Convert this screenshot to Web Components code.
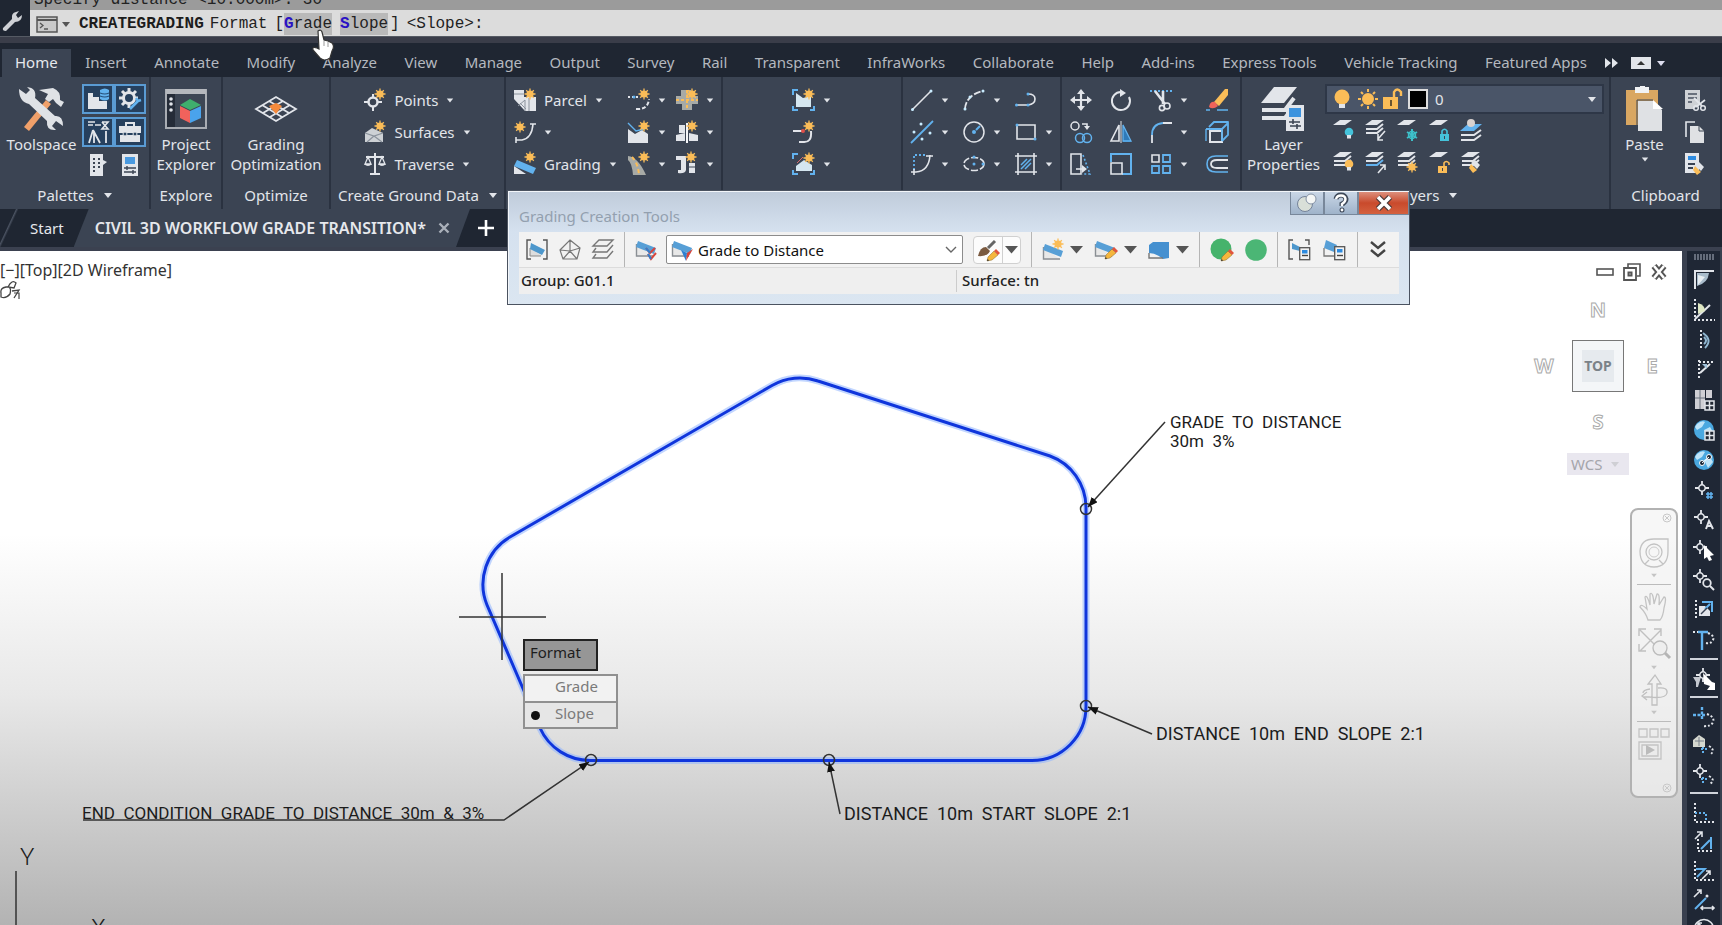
<!DOCTYPE html>
<html lang="en">
<head>
<meta charset="utf-8">
<title>Civil 3D Workflow Grade Transition</title>
<style>
html,body{margin:0;height:100%}
body{font:15px/20px "Noto Sans","Open Sans",sans-serif;background:#1f2632;overflow:hidden}
</style>
</head>
<body>
<cad-workspace></cad-workspace>
<script>
const W='#e2e5ea', B='#62b2ee', O='#fbbd58', G='#8b929c';

/* shared icon fragments */
const sun=(x,y)=>`<g transform="translate(${x} ${y})"><circle r="3.6" fill="${O}"/><path d="M0-5.5V5.5M-5.5 0H5.5M-3.8-3.8 3.8 3.8M-3.8 3.8 3.8-3.8" stroke="${O}" stroke-width="1.3"/></g>`;
const ln=(d,c=W,w=1.6,x='')=>`<path d="${d}" fill="none" stroke="${c}" stroke-width="${w}" ${x}/>`;
const fl=(d,c=W,x='')=>`<path d="${d}" fill="${c}" ${x}/>`;
const dot=(x,y,c='#c9ecff',r=1.5)=>`<circle cx="${x}" cy="${y}" r="${r}" fill="${c}"/>`;
const dash='stroke-dasharray="2 2"';
const sheet=(y,c=W)=>fl(`M8 ${y}H20L13 ${y+5}H1Z`,c);
const stack=(c2=W,c3=W)=>sheet(1)+ln('M2 10H13L19 5',c2,2)+ln('M2 14H13L19 9',c3,2);
const target=(x,y)=>`<g transform="translate(${x} ${y})"><circle r="3.2" fill="none" stroke="${W}" stroke-width="1.5"/><path d="M0-3V-7M0 3V7M-3 0H-7M3 0H7" stroke="${W}" stroke-width="1.8"/></g>`;
const pencil=(x,y)=>`<g transform="translate(${x} ${y})"><path d="M0 10 1 6 7 0 11 4 5 9Z" fill="#f5b63c" stroke="#8a6a2c" stroke-width=".5"/><path d="M7 0 9-2 13 2 11 4Z" fill="#e2553d"/><path d="M0 10 .6 8 2.200 9.400Z" fill="#333"/></g>`;
const palette=(x,y,w=11,h=13)=>`<g transform="translate(${x} ${y})"><rect x=".7" y=".7" width="${w}" height="${h}" fill="#f3f3f3" stroke="#555" stroke-width="1.3"/><rect x="3" y="3" width="${w-4.500}" height="3.500" fill="#2d8be0"/><path d="M3 ${h-3.500}H${w-1}" stroke="#444" stroke-width="1.400"/></g>`;
const slab=fl('M1 5V18H19','#e8e8e8')+ln('M1.500 5V17H18','#8a8f94',1.4)+fl('M3 2 21 9 19 15 1 8Z','#579fd6');
const bulb=(x,y,c=O)=>`<g transform="translate(${x} ${y})"><circle r="4.3" fill="${c}"/><path d="M-2 3H2V6.500H-2Z" fill="${W}"/></g>`;
const lock=(x,y,c,open)=>`<g transform="translate(${x} ${y})"><rect x="0" y="5" width="9" height="7" fill="${c}"/><path d="${open?'M6 5V2Q8-1 11 2V4':'M2 5V2Q4.500-1.500 7 2V5'}" fill="none" stroke="${c}" stroke-width="1.600"/><path d="M4.500 7V10" stroke="#3b4453"/></g>`;
const brush=fl('M11 12 15 9 20 14 17 18Z')+fl('M11 13 17 19 13 22 9 17Z',O);
const globe=`<circle cx="11" cy="11" r="10" fill="#4aa8e0"/><path d="M4 5Q9 1 12 3L9 8 4 11 2 8ZM11 11 17 8 20 13 15 19Z" fill="#bfe4f8"/>`;
const grid=(x,y)=>`<path d="M${x} ${y}h9v9h-9zM${x+4.500} ${y}v9M${x} ${y+4.500}h9" fill="#1f2632" stroke="${W}" stroke-width="1.5"/>`;

const ICONS={
 wrench:[22,22,fl('M2 18 11 9Q10 3 15 2L18 1 15 5 17 8 21 5Q21 12 14 12L5 21Q1 21 2 18Z','#cfd1d6')],
 prompt:[22,17,`<rect x="1" y="1" width="20" height="15" fill="#c9c9c9" stroke="#555" stroke-width="1.500"/><path d="M1 4H21" stroke="#555" stroke-width="2"/>`+ln('M4 7 7 9.500 4 12M8 13H12','#555',1.3)],
 caret:[8,5,fl('M0 0H8L4 5Z','currentColor')],
 tools:[46,44,fl('M6 40 28 13 33 17 11 44Z','#f0a06a')+fl('M21 3 35 1Q43 4 42 13L46 15 43 20 38 16 35 12 31 15 27 12 30 7Z','#dfe2e6')+fl('M1 2 8 7 12 3 9 0Q19 1 17 11L37 29Q45 28 45 39L38 34 34 39 38 43Q28 44 29 34L11 17Q1 15 1 2Z','#dfe2e6')],
 t1:[24,22,fl('M2 5H7V17H21V21H2Z')+fl('M7 9H13V13H21V18H7Z')+fl('M14 2Q19-1 23 2V11Q19 14 14 11Z',B)+ln('M14 5Q19 7 23 5M14 8Q19 10 23 8','#26507a',1.2)],
 t2:[24,22,`<circle cx="11" cy="10" r="5.500" fill="none" stroke="${W}" stroke-width="3"/>`+ln('M11 0V4M11 16V20M1 10H5M17 10H20M4 3 7 6M18 3 15 6M4 17 7 14',W,3)+ln('M12 21 20 13M18 10 20 13 23 12',B,2.5)],
 t3:[24,22,ln('M2 4H7M9 4H12M2 1H9M12 4H15M16 1H22L16 8H22L16 1',W,1.6)+ln('M7 9 3 22M7 9 14 22M8 10V22M20 10V22',W,1.8)],
 t4:[24,22,ln('M8 5V2H16V5',W,2)+fl('M1 5H23V12H1Z')+fl('M2 14H22V21H2Z')+`<circle cx="7" cy="13" r="2" fill="#26405e" stroke="${W}"/><circle cx="17" cy="13" r="2" fill="#26405e" stroke="${W}"/>`],
 t5:[18,22,fl('M1 0H14V6L18 8 14 11V22H1Z')+fl('M4 4H6V6H4ZM9 4H11V6H9ZM4 8H6V10H4ZM9 8H11V10H9ZM4 12H6V14H4ZM9 12H11V14H9ZM4 16H6V18H4Z','#3b4453')],
 t6:[18,22,fl('M1 0H17V22H1Z')+fl('M4 3H14V10H4Z','#4a9ae0')+ln('M3 14H15M3 18H15M6 12V16M12 16V20','#3b4453',1.4)],
 explorer:[42,40,`<rect x="1" y="1" width="40" height="38" fill="#3d4654" stroke="#a9adb3" stroke-width="2"/><path d="M1 0H41V5H1Z" fill="#b5b8bd"/><path d="M2 5H10V38H2Z" fill="#252c38"/>`+dot(6,10,W,1.8)+dot(6,15,W,1.8)+dot(6,21,W,1.8)+fl('M15 16 25 10 36 16 25 21Z','#3fae6d')+fl('M15 17 25 22V34L15 29Z','#f0625c')+fl('M36 17 25 22V34L36 29Z','#4aa3ec')],
 optimize:[44,28,ln('M2 14 22 2 42 14 22 26ZM8 10 28 22M15 6 35 18M29 6 9 18M36 10 16 22',W,1.8)+fl('M15 11 22 8 28 11 22 19Z','#f58a3c')],
 points:[22,22,`<circle cx="9" cy="13" r="4.500" fill="none" stroke="${W}" stroke-width="2.500"/>`+ln('M9 5V9M9 17V22M0 13H4M14 13H18',W,2)+sun(16,5)],
 surfaces:[22,22,fl('M1 12 8 7 19 12V21H1Z','#cdd1d5')+ln('M1 12 10 15 19 12M10 15 3 21M10 15 18 21','#8a929c',1.2)+sun(16,5)],
 traverse:[22,22,ln('M11 0V20M2 4H20M6 21H16',W,2)+ln('M4 4 1 11H7ZM18 4 15 11H21Z',W,1.3)+fl('M0 11H8Q4 15 0 11ZM14 11H22Q18 15 14 11Z')],
 parcel:[22,22,fl('M0 1H10V8H22V22H11L0 10Z')+ln('M0 5H10M11 11 4 17M11 11V22M15 9V22M6 14 12 20','#8a929c',1)+sun(16,5)],
 curve:[22,22,ln('M2 19H8Q18 17 19 3M2 16V22M16 3H22')+sun(6,6)],
 grading:[22,22,fl('M0 13 12 21H0Z')+fl('M3 7 22 15 19 21 0 13Z',B)+sun(16,4)],
 alignment:[22,22,ln('M0 8H11',W,2,dash)+ln('M8 20Q20 21 21 10',W,2,'stroke-dasharray="4 2"')+sun(16,5)+dot(6,8,B)],
 profile:[22,22,fl('M0 8 7 13 14 9 20 13V22H0Z')+ln('M0 2 8 10 16 8',B,1.4)+sun(16,5)],
 corridor:[22,22,fl('M0 3Q10 4 18 22H5Q4 10 0 7Z','#a7aaa6')+ln('M4 4Q10 10 11 22',O,2,'stroke-dasharray="4 3"')+sun(16,4)],
 intersection:[22,22,fl('M5 1H15V7H22V15H16V21H6V15H0V7H5Z','#a7aaa6')+ln('M11 1V21M0 11H22',O,2,'stroke-dasharray="3 2"')+sun(16,5)],
 assembly:[22,22,fl('M3 4H9V12H3ZM0 14 9 12V20H0ZM13 12 22 14V20H13Z')+ln('M11 2V22','#f5f6f8',2)+sun(16,5)],
 pipe:[22,22,fl('M0 3H10V17Q9 21 2 20V17H5V7H0ZM13 10H19V20H13Z')+ln('M13 14H19','#3b4453',1)+sun(15,4)],
 pview:[22,22,ln('M0 6V1H5M0 17V21H5M17 21H21V17',B,2)+fl('M3 4 10 9 18 7V18H3Z','#d5e6ef')+sun(16,5)],
 sample:[22,22,ln('M0 10H9',W,2)+dot(10,10,'#e0504a',2)+ln('M6 21H10Q19 22 18 10',W,2)+sun(16,5)],
 section:[22,22,ln('M0 6V1H5M0 17V21H5M17 21H21V17',B,2)+fl('M3 13 11 7 19 12V18H3Z','#d5e6ef')+ln('M4 10 10 4','#d86a6a',1)+sun(16,5)],
 line:[22,22,ln('M1 21 20 2')+dot(1.5,20.5)+dot(20,2)],
 arc:[22,22,ln('M2 20Q3 6 20 2',W,1.8,'stroke-dasharray="7 2"')+dot(2,20)+dot(20,2)+dot(7,8)],
 pline:[22,22,ln('M1 16H13M13 5Q20 5 20 10T13 16')+dot(1.500,16,B)+dot(13,16,B)+dot(13,5,B)],
 xline:[22,22,ln('M0 22 22 0',B,1.8)+dot(3,11)+dot(10,3)+dot(11,18)+dot(19,12)],
 circle:[22,22,`<circle cx="11" cy="11" r="10" fill="none" stroke="${W}" stroke-width="1.500"/>`+dot(11,11,B,2)+ln('M13 9 17 5',B,2)],
 rect:[22,22,ln('M2 4H20V18H2Z')+dot(2,4,B)+dot(20,18,B)],
 fit:[22,22,ln('M3 17V2H16',B,1.8,dash)+ln('M3 16V22M0 19H5Q18 18 19 2M15 3H22')],
 ellipse:[22,22,`<ellipse cx="11" cy="11" rx="10" ry="6.500" fill="none" stroke="${W}" stroke-width="1.600" stroke-dasharray="7 2"/>`+dot(11,4,B)+dot(11,11,B)+dot(20,11,B)],
 hatch:[22,22,ln('M3 0V22M19 0V22M0 3H22M0 19H22')+ln('M6 12 12 6M6 16 16 6M10 16 16 10',B,1.5)],
 move:[22,22,ln('M11 2V20M2 11H20',W,2.2)+fl('M11 0 15 5H7ZM11 22 15 17H7ZM0 11 5 7V15ZM22 11 17 7V15Z')],
 rotate:[22,22,ln('M11 3A9 9 0 1 0 19 8',W,2)+fl('M10 0 16 4 10 8Z')],
 trim:[22,22,ln('M0 2H22',B,2,dash)+ln('M5 2 15 15M13 2 13 15',W,2.6)+`<circle cx="17" cy="17" r="3" fill="none" stroke="${W}" stroke-width="1.600"/><circle cx="12" cy="19" r="2.600" fill="none" stroke="${W}" stroke-width="1.600"/>`],
 erase:[22,22,fl('M8 13 19 0H22V6L13 17Z',O)+fl('M3 18Q4 12 9 13L12 17Q7 21 3 18Z','#f0635a')+ln('M0 21H4M11 21H22',B,1.6)],
 copy:[22,22,`<circle cx="5" cy="5" r="4" fill="none" stroke="${W}" stroke-width="1.500"/><circle cx="10" cy="17" r="4.500" fill="none" stroke="${B}" stroke-width="1.500"/><circle cx="17" cy="17" r="4.500" fill="none" stroke="${B}" stroke-width="1.500"/>`+ln('M12 3H17V7')+fl('M14 5H20L17 9Z')],
 mirror:[22,22,ln('M9 4V20H1Z')+fl('M13 3V21H21Z','#2f7ab8')+ln('M13 4V20H21Z',B,1.3)+ln('M11 0V22',W,1)],
 fillet:[22,22,ln('M2 14Q2 3 13 2',B,1.8)+ln('M13 2H22M2 22V14',W,1.8)],
 cube:[22,22,ln('M4 10H16V21H4Z',W,2)+ln('M0 8H16V20M16 8 22 2V14L16 20M3 6 8 1H22',B,1.8)+ln('M0 8V20',B,1.4)],
 stretch:[22,22,ln('M1 1H11V21H1Z')+ln('M13 2 20 21H12',B,1.6,dash)+ln('M6 16H15')+fl('M12 12 17 16 12 20Z')],
 scale:[22,22,ln('M1 9V1H21V21H12',B,2)+ln('M1 10H12V21H1Z')],
 array:[22,22,ln('M2 2H9V9H2Z')+ln('M13 2H20V9H13ZM2 13H9V20H2ZM13 13H20V20H13Z',B,1.8)],
 offset:[22,22,ln('M22 3H10Q1 3 1 11T10 19H22',B,1.6)+ln('M22 7H11Q5 7 5 11T11 15H22',W,1.8)],
 layerprops:[46,46,fl('M14 1H37L24 17H1Z')+ln('M2 24H25L34 12M2 32H25L34 20',W,4)+fl('M26 19H44V45H26Z')+fl('M29 22H41V31H29Z','#3d93de')+ln('M29 36H40M30 40H41M33 33V38M37 38V43','#3b4453',1.6)],
 bulb:[20,22,`<circle cx="9" cy="9" r="7.500" fill="${O}"/><path d="M6 16H12V20H6Z" fill="${W}"/>`],
 sun:[20,20,`<circle cx="10" cy="10" r="6" fill="${O}"/>`+ln('M10 0V3M10 17V20M0 10H3M17 10H20M3 3 5 5M15 15 17 17M3 17 5 15M15 5 17 3',O,2)],
 unlock:[20,22,`<rect x="0" y="9" width="15" height="12" fill="${O}"/>`+ln('M11 10V4Q14-1 18 4V8',O,2.400)+ln('M8 12V18','#6b5530',2)],
 lo1:[22,22,sheet(1)+bulb(17,13,'#45c3da')],
 lo2:[22,22,stack()+ln('M21 12 14 20M14 15V21H19')],
 lo3:[22,22,sheet(1)+ln('M16 10V22M11 13 21 19M21 13 11 19','#3dbfc9',2)+`<circle cx="16" cy="16" r="3.500" fill="none" stroke="#3dbfc9" stroke-width="1.500"/>`],
 lo4:[22,22,sheet(1)+lock(12,10,'#45c3da')],
 lo5:[22,22,fl('M8 5H22L14 12H0Z',B)+`<circle cx="11" cy="4" r="4" fill="#d9d2cf"/>`+ln('M1 16H14L21 11M1 21H14L21 16',W,2)],
 lo6:[22,22,stack()+bulb(17,13)],
 lo7:[22,22,stack(W,B)+ln('M14 22 21 14M16 14H21V19')],
 lo8:[22,22,stack()+`<g transform="translate(0 11)">${sun(16,5)}</g>`],
 lo9:[22,22,sheet(1)+lock(10,10,O,1)],
 lo10:[22,22,stack()+brush],
 paste:[38,44,fl('M0 3H32V38H0Z','#d9a762')+fl('M9 0H14V-1H19V0H23V6H9Z','#f1f3f5')+fl('M12 14H27L36 23V44H12Z','#dfe1e4')+fl('M27 13 37 22H27Z','#fff')+ln('M11 44V13H27','#3b4453',1)],
 cut:[22,22,fl('M1 1H16V14L10 20H1Z','#cfd2d6')+ln('M4 5H13M4 9H13M4 13H8','#4a5260',1.4)+ln('M10 9 18 17M21 11 12 18',W,1.8)+`<circle cx="19" cy="19" r="2.300" fill="none" stroke="${W}" stroke-width="1.500"/><circle cx="12" cy="19" r="2.300" fill="none" stroke="${W}" stroke-width="1.500"/>`],
 copyclip:[22,22,ln('M2 16V1H11')+fl('M6 5H15L20 10V22H6Z','#dfe1e4')+ln('M15 5V10H20','#3b4453',1)],
 match:[22,22,fl('M1 0H15V20H1Z')+fl('M4 3H12V7H4Z','#2d8be0')+ln('M4 11H11M4 15H9','#3b4453',2)+brush],
 ffwd:[14,10,fl('M0 0 6 5 0 10ZM7 0 13 5 7 10Z')],
 mini:[22,12,fl('M1 0H21V12H1Z')+fl('M7 8 11 4 15 8Z','#333')],
 plus:[18,18,ln('M9 1V17M1 9H17','#fff',2.6)],
 x:[12,12,ln('M1.500 1.500 10.500 10.500M10.500 1.500 1.500 10.500','#aab0ba',2.4)],
 /* dialog */
 g1:[22,22,ln('M5 1H1V20H5M17 1H21V20H17','#555',1.4)+fl('M4 9V17H16','#ddd')+ln('M4 9V17H15','#888',1)+fl('M5 4 19 11 16 16 4 10Z','#4d97cc')],
 g2:[22,22,ln('M11 1 21 9 18 20H4L1 11ZM11 1V12M1 11 11 12 21 9M4 20 11 12 18 20','#777',1.2)],
 g3:[22,22,ln('M7 1H21L15 7H1ZM4 9 1 13H15L21 6M4 15 1 19H15L21 12','#777',1.4)],
 g4:[22,22,slab+ln('M11 9 15 14 20 9M13 15 16 20 21 14','#d8453c',2)+ln('M11 9 15 14M13 15 16 20','#2f7fd0',2)],
 g5:[22,22,slab+fl('M10 11 15 22 16 14Z','#2f7fd0')+fl('M22 10 15 22 16 14Z','#d8453c')],
 g6:[22,22,fl('M1 17Q3 8 9 8L13 12Q10 18 1 17Z','#7a5a40')+ln('M11 9 18 2','#666',3)+pencil(10,12)],
 g7:[22,22,`<g transform="translate(0 3)">${slab}</g>`+sun(16,5)],
 g8:[24,22,slab+pencil(11,10)],
 g9:[22,22,fl('M1 6 5 3H21V19L15 20Q8 14 1 14Z','#4590d0')+ln('M1 14V19H15','#777',1.4)],
 g10:[24,24,`<circle cx="11" cy="11" r="10.500" fill="#46b36c"/>`+pencil(11,13)],
 g11:[22,22,`<circle cx="11" cy="11" r="10.800" fill="#4bb675"/>`],
 g12:[24,22,ln('M5 1H1V20H5M17 1H21V6','#555',1.4)+fl('M4 4 12 8V12L4 10Z','#4d97cc')+palette(11,8,10,12)],
 g13:[24,22,fl('M3 1 14 6 11 13 1 9Z','#579fd6')+ln('M1 9V17H11','#777',1.3)+palette(11,7,10,13)],
 g14:[16,18,ln('M1 1 8 7 15 1M1 9 8 15 15 9','#444',2.4)],
 mcaret:[13,8,fl('M0 0H13L6.500 7.500Z','#555')],
 chev:[12,8,ln('M1 1 6 6 11 1','#666',1.4)],
 pin:[22,20,`<circle cx="9" cy="11" r="7.500" fill="#d9dfd8" stroke="#75839a"/><circle cx="15" cy="6" r="5" fill="#f4f6f5" stroke="#8592a5"/>`],
 help:[16,18,`<path d="M3 5Q4 1 8 1T13 5Q13 8 9 10V12" fill="none" stroke="#3d4858" stroke-width="5"/><circle cx="9" cy="16" r="2.500" fill="#3d4858"/><path d="M3 5Q4 1.500 8 1.500T12.500 5Q12.500 8 9 10V12" fill="none" stroke="#fff" stroke-width="2.400"/><circle cx="9" cy="16" r="1.400" fill="#fff"/>`],
 close:[20,18,ln('M4 3 16 15M16 3 4 15','#4a3c3c',6)+ln('M4 3 16 15M16 3 4 15','#fff',3.6)],
 /* drawing area */
 dmin:[18,9,`<rect x="1" y="1" width="16" height="6" fill="#fff" stroke="#555" stroke-width="1.600"/>`],
 dmax:[18,18,ln('M5 4V1H17V13H14','#555',1.600)+ln('M1 5H13V17H1Z','#555',1.800)+ln('M5.500 9.500H8.500V12.500H5.500Z','#555',2)],
 dclose:[18,16,ln('M4 2 14 14M14 2 4 14','#555',6.500)+ln('M4 2 14 14M14 2 4 14','#fff',2.600)],
 corner:[22,20,ln('M1 13Q0 8 6 7T10 14Q6 19 1 17ZM8 7Q12-1 16 3L14 8ZM12 11 19 10 14 18','#444',1.300)+ln('M14 13H19V19','#444',1.200)],
 hand:[24,32,`<path d="M7 2Q10 0 11 3L13 11 17 12 21 14Q24 17 21 22L19 29Q13 33 9 29L2 21Q1 17 6 19L8 20Z" fill="#fff" stroke="#333" stroke-width="1.200"/>`+ln('M13 12V17M17 13V18','#999',1)],
 wheel:[32,32,ln('M2 14Q3 2 16 2H30V14Q30 30 16 30T2 14ZM8 15A8 8 0 1 0 24 15 8 8 0 1 0 8 15ZM11 23 7 27M21 23 25 27','#c3c3c3',1.300)+`<circle cx="16" cy="15" r="5" fill="none" stroke="#ccc"/>`],
 pan:[32,32,ln('M10 29Q8 22 2 16Q3 12 9 18L7 6Q9 3 12 14V3Q15 0 16 13L19 3Q22 2 21 14L26 6Q29 6 26 17 25 26 22 29Z','#c3c3c3',1.300)],
 zoomx:[34,34,ln('M3 3 22 22M2 9V2H9M24 3 3 24M17 2H24V9M2 17V24H9','#c0c0c0',1.400)+`<circle cx="23" cy="21" r="7" fill="#eee" stroke="#bbb" stroke-width="1.300"/>`+ln('M28 26 33 31','#b5b5b5',3)],
 orbit:[30,32,ln('M13 31V10H9L16 1 22 10H18V31ZM19 14Q29 13 28 19T10 23H4M8 18 3 22 8 26M4 19Q4 16 11 15','#c0c0c0',1.300)],
 motion:[32,32,ln('M1 1H9V9H1ZM12 1H20V9H12ZM23 1H31V9H23ZM1 14H23V31H1ZM4 17H20V28H4Z','#c3c3c3',1.300)+fl('M8 17 17 22 8 27Z','#bbb')],
 smallx:[10,10,`<circle cx="5" cy="5" r="4" fill="none" stroke="#c8c8c8"/>`+ln('M3 3 7 7M7 3 3 7','#c8c8c8',1)],
 /* snap toolbar */
 s1:[22,22,ln('M2 20V2H21',W,2)+fl('M4 4H16Q15 14 4 17Z','#a9bccb')+fl('M5 6 12 8 5 16Z','#e8eef2')],
 s2:[22,22,ln('M2 0V21H22',W,2,dash)+ln('M2 20 17 6',W,2)+fl('M5 4Q12 6 12 12L5 15Z','#dfe8c4')],
 s3:[22,22,ln('M8 1V21',W,2,dash)+ln('M10 4Q20 11 12 19M11 8Q15 12 11 15','#8fb6d0',2)],
 s4:[22,22,ln('M6 1V21M6 3H20',W,2,dash)+ln('M7 14 17 5',W,2)+fl('M9 5H14V10Z','#9fc1da')],
 s5:[22,22,fl('M2 1H12V20H2ZM13 1H19V9H13Z','#cfcfd4')+ln('M2 9H12M7 1V20','#69707c',1)+grid(12,12)],
 s6:[22,22,globe+grid(12,12)],
 s7:[22,22,globe+`<circle cx="9" cy="14" r="2.500" fill="#14202f" stroke="#fff"/><circle cx="16" cy="8" r="2.500" fill="#14202f" stroke="#fff"/>`+ln('M9 14 16 8','#fff',1)],
 s8:[22,22,target(9,9)+ln('M15 13V20M18 13V20M13 15H20M13 18H20',B,1.5)],
 s9:[22,22,target(8,8)+ln('M13 20 16 12 20 20M14 17H19',W,2)],
 s10:[22,22,target(7,8)+fl('M11 6 21 16 17 17 19 21 16 22 14 18 11 20Z','#fff')],
 s11:[22,22,target(7,7)+`<circle cx="14" cy="14" r="3.800" fill="none" stroke="${W}" stroke-width="1.800"/>`+ln('M17 17 21 21',W,2)],
 s12:[22,22,ln('M3 1V21',W,2,dash)+fl('M6 7 12 7 17 12V17H6Z')+ln('M9 3H19V13M12 10 17 5',B,2)+ln('M8 15 14 9','#384252',1.500)],
 s13:[22,22,ln('M0 3H9',W,2,dash)+ln('M5 3H15M9 3V21',B,2.400)+ln('M15 4Q22 7 20 11T13 14',W,2,dash)],
 s14:[24,24,fl('M1 10H9L6 20H4V15Z','#c4c8cf')+target(11,8)+fl('M11 6 20 15 23 16V23H15L18 19 12 17Z','#fff')],
 s15:[22,22,ln('M9 1V14M0 9H12',B,2.400,'stroke-dasharray="3 1.500"')+ln('M14 8Q22 11 20 16T9 20',W,2,dash)],
 s16:[24,22,fl('M1 5 7 0 13 4V12H1Z','#d5d8cf')+ln('M3 6H12M7 2V11','#78808a',1)+ln('M9 14H16M11 12V18',B,2,dash)+ln('M17 11Q24 15 18 20',W,2,dash)],
 s17:[24,22,target(8,7)+ln('M9 15H16M11 13V19',B,2,dash)+ln('M17 12Q24 16 18 20',W,2,dash)],
 s18:[22,22,ln('M2 1V20H21',W,2,dash)+ln('M2 11H13V20',B,2,dash)],
 s19:[22,22,ln('M5 8V20H20',W,2,dash)+ln('M2 8 9 1M4 1H9V6')+ln('M8 18 17 9M18 6V18',B,2)],
 s20:[22,22,ln('M2 1V20H21',W,2,dash)+ln('M3 9H12L4 17',B,1.800)+ln('M9 19 17 11M13 11H17V15',W,1.600)],
 s21:[22,22,ln('M1 8 8 1M4 1H8V5M8 19H21M10 17 8 19 10 21M19 17 21 19 19 21')+ln('M2 20 13 9',B,2)+dot(14,7,W)],
 s22:[22,22,`<circle cx="11" cy="11" r="9.500" fill="none" stroke="${W}" stroke-width="1.600"/>`+ln('M11 11 5 5M5 9V5H9')],
 grip:[20,6,ln('M1 0V6M4 0V6M7 0V6M10 0V6M13 0V6M16 0V6M19 0V6','#7d8592',1.500)]
};

const define=(name,css,html)=>customElements.define(name,class extends HTMLElement{
  constructor(){super();
    const t=document.createElement('template');
    t.innerHTML=`<style>*{box-sizing:border-box}button{all:unset;box-sizing:border-box;display:flex;align-items:center}${css}</style>${html}`;
    this.attachShadow({mode:'open'}).append(t.content.cloneNode(true));
  }});

customElements.define('cad-icon',class extends HTMLElement{
  connectedCallback(){
    if(this.shadowRoot)return;
    const [w,h,m]=ICONS[this.getAttribute('name')];
    this.attachShadow({mode:'open'}).innerHTML=`<style>:host{display:inline-flex;flex:none}svg{display:block;overflow:visible}</style><svg width="${w}" height="${h}" viewBox="0 0 ${w} ${h}" aria-hidden="true">${m}</svg>`;
  }});
const I=n=>`<cad-icon name="${n}"></cad-icon>`;

/* small ribbon command: icon, optional label, optional drop-down caret */
customElements.define('tool-button',class extends HTMLElement{
  connectedCallback(){
    if(this.shadowRoot)return;
    const l=this.getAttribute('label'),m=this.hasAttribute('menu');
    this.attachShadow({mode:'open'}).innerHTML=`<style>:host{display:flex;height:32px;align-items:center}button{all:unset;display:flex;align-items:center;gap:8px}button cad-icon:nth-of-type(2){transform:scale(.8)}</style>
    <button type="button" aria-label="${l||this.getAttribute('tip')}">${I(this.getAttribute('icon'))}${l?`<span>${l}</span>`:''}${m?I('caret'):''}</button>`;
  }});
const T=(icon,tip,menu)=>`<tool-button icon="${icon}" tip="${tip}"${menu?' menu':''}></tool-button>`;

define('command-line',`
:host{display:grid;grid-template-columns:30px 1fr;height:37px;background:#1f2632;font:16px/20px "Liberation Mono",monospace;color:#222;border-bottom:1px solid #555a63}
.wrench{align-self:end;margin:0 0 4px 1px}
.hist{height:10px;background:#9b9b9b;display:flex;align-items:flex-end;overflow:hidden;padding-left:4px;white-space:pre}
form{height:26px;background:#dcdcdc;display:flex;align-items:center;padding:2px 6px 0;margin:0}
.fmt{margin-left:6px}b{color:#1c1c1c;margin-left:9px}
.opts{display:flex;align-items:center;margin-left:7px}
button.o{background:#b9b9b9;height:22px;margin-right:8px}button.o:last-of-type{margin-right:2px}
i{font-style:normal;color:#2a12c4;font-weight:bold}
.def{margin-left:7px}.car{margin-left:4px;color:#555}
`,`<cad-icon class="wrench" name="wrench"></cad-icon><div><div class="hist"><span>Specify distance &lt;10.000m&gt;: 30</span></div>
<form>${I('prompt')}<cad-icon class="car" name="caret"></cad-icon><b>CREATEGRADING</b><span class="fmt">Format</span><span class="opts">[<button type="button" class="o"><i>G</i>rade</button><button type="button" class="o"><i>S</i>lope</button>]</span><span class="def">&lt;Slope&gt;:</span></form></div>`);

define('ribbon-tabs',`
:host{display:block;background:#1f2632;border-top:6px solid #3a3d49}
nav{display:flex;height:34px;align-items:flex-end;padding-left:2px}
.tabs{display:flex;flex:1;justify-content:space-between;min-width:0}
a{color:#b4b8bf;text-decoration:none;height:28px;padding:3px 13px 0;white-space:nowrap}
a.on{background:#3b4453;color:#e6e8ec}
.tail{display:flex;align-items:center;height:28px;gap:11px;width:122px;padding-left:5px;color:#dde}
.tail cad-icon:last-child{margin-left:-6px}
`,`<nav><div class="tabs">${['Home','Insert','Annotate','Modify','Analyze','View','Manage','Output','Survey','Rail','Transparent','InfraWorks','Collaborate','Help','Add-ins','Express Tools','Vehicle Tracking','Featured Apps'].map((t,i)=>`<a href="#"${i?'':' class="on"'}>${t}</a>`).join('')}</div><div class="tail">${I('ffwd')}${I('mini')}${I('caret')}</div></nav>`);

define('ribbon-panel',`
:host{display:flex;flex-direction:column;border-right:2px solid #2a3240;min-width:0}
.body{display:flex;height:107px;padding-top:7px;justify-content:center}
.title{display:flex;height:25px;justify-content:center;align-items:center;gap:10px;padding-bottom:3px;white-space:nowrap}
`,`<div class="body"><slot></slot></div><div class="title"><slot name="title"></slot></div>`);

define('big-button',`
:host{display:flex}button{flex-direction:column;text-align:center;justify-content:flex-start}
.ic{height:50px;display:flex;align-items:center}
`,`<button type="button"><span class="ic"><slot name="icon"></slot></span><slot></slot></button>`);
const big=(ic,html)=>`<big-button><cad-icon slot="icon" name="${ic}"></cad-icon>${html}</big-button>`;
const title=(t,m=true)=>`<span slot="title">${t}</span>${m?'<cad-icon slot="title" name="caret"></cad-icon>':''}`;

define('ribbon-bar',`
:host{display:grid;grid-template-columns:151fr 72fr 108fr 175fr 217fr 180fr 159fr 180fr 369fr 111fr;height:132px;background:#3b4453;color:#e2e5ea}
.toggles{display:grid;grid-template-columns:32px 32px;grid-auto-rows:30px;row-gap:3px;margin:0 -4px 0 6px}
.toggles button{justify-content:center}.toggles .on{border:2px solid #5a9bd3;background:#26405e}
.col{display:flex;flex-direction:column}
.cols{display:flex;width:100%;padding-left:8px}
.draw{gap:14px}.modify{gap:18px}.wide{width:114px}.mid{width:48px}
.lp{display:flex;justify-content:center;width:83px}
.layers{display:flex;flex-direction:column;flex:1;padding-right:5px}
.combo{display:flex;height:30px;align-items:center;background:#4a5568;border:2px solid #2e3747;padding:0 6px;gap:5px}
.combo select{appearance:none;border:0;background:none;color:#e2e5ea;font:inherit;flex:1;padding:0 0 0 2px;margin:0}
.sw{width:20px;height:20px;background:#000;border:2px solid #ddd}
.row{display:flex;gap:10px;padding-left:7px}
.paste{margin-right:20px}
.paste cad-icon[name=caret]{margin-top:3px;transform:scale(.8)}
`,`
<ribbon-panel>${big('tools','Toolspace')}<div class="toggles"><button class="on" aria-label="Prospector">${I('t1')}</button><button class="on" aria-label="Settings">${I('t2')}</button><button class="on" aria-label="Survey">${I('t3')}</button><button class="on" aria-label="Toolbox">${I('t4')}</button><button aria-label="Calculator">${I('t5')}</button><button aria-label="Properties">${I('t6')}</button></div>${title('Palettes')}</ribbon-panel>
<ribbon-panel>${big('explorer','Project<br>Explorer')}${title('Explore',false)}</ribbon-panel>
<ribbon-panel>${big('optimize','Grading<br>Optimization')}${title('Optimize',false)}</ribbon-panel>
<ribbon-panel><div class="col"><tool-button icon="points" label="Points" menu></tool-button><tool-button icon="surfaces" label="Surfaces" menu></tool-button><tool-button icon="traverse" label="Traverse" menu></tool-button></div>${title('Create Ground Data')}</ribbon-panel>
<ribbon-panel><div class="cols"><div class="col wide"><tool-button icon="parcel" label="Parcel" menu></tool-button>${T('curve','Feature line',1)}<tool-button icon="grading" label="Grading" menu></tool-button></div>
<div class="col mid">${T('alignment','Alignment',1)+T('profile','Profile',1)+T('corridor','Corridor',1)}</div><div class="col">${T('intersection','Intersections',1)+T('assembly','Assembly',1)+T('pipe','Pipe network',1)}</div></div></ribbon-panel>
<ribbon-panel><div class="col">${T('pview','Profile view',1)+T('sample','Sample lines')+T('section','Section views',1)}</div></ribbon-panel>
<ribbon-panel><div class="cols draw"><div class="col">${T('line','Line',1)+T('xline','Construction line',1)+T('fit','Best fit',1)}</div><div class="col">${T('arc','Arc',1)+T('circle','Circle',1)+T('ellipse','Ellipse',1)}</div><div class="col">${T('pline','Polyline')+T('rect','Rectangle',1)+T('hatch','Hatch',1)}</div></div></ribbon-panel>
<ribbon-panel><div class="cols modify"><div class="col">${T('move','Move')+T('copy','Copy')+T('stretch','Stretch')}</div><div class="col">${T('rotate','Rotate')+T('mirror','Mirror')+T('scale','Scale')}</div><div class="col">${T('trim','Trim',1)+T('fillet','Fillet',1)+T('array','Array',1)}</div><div class="col">${T('erase','Erase')+T('cube','Explode')+T('offset','Offset')}</div></div></ribbon-panel>
<ribbon-panel><div class="lp">${big('layerprops','Layer<br>Properties')}</div><div class="layers"><label class="combo">${I('bulb')+I('sun')+I('unlock')}<span class="sw"></span><select aria-label="Current layer"><option>0</option></select>${I('caret')}</label><div class="row">${['lo1','lo2','lo3','lo4','lo5'].map((n,i)=>T(n,['Off','Make current','Freeze','Lock','Layer walk'][i])).join('')}</div><div class="row">${['lo6','lo7','lo8','lo9','lo10'].map((n,i)=>T(n,['Turn all on','Previous','Thaw','Unlock','Match layer'][i])).join('')}</div></div>${title('Layers')}</ribbon-panel>
<ribbon-panel><div class="paste">${big('paste','Paste<cad-icon name="caret"></cad-icon>')}</div><div class="col">${T('cut','Cut')+T('copyclip','Copy clip')+T('match','Match properties')}</div>${title('Clipboard',false)}</ribbon-panel>`);

define('document-tabs',`
:host{display:flex;height:42px;background:#1f2632;border-bottom:4px solid #3b4150;color:#e6e8ec;align-items:stretch}
.start{display:flex;align-items:center;padding:0 10px 0 30px;color:inherit;text-decoration:none;background:linear-gradient(115deg,transparent 14px,#4b5362 15px,transparent 17px)}
.doc{display:flex;align-items:center;gap:12px;padding:0 20px 0 21px;background:#3b4453;clip-path:polygon(15px 0,100% 0,calc(100% - 14px) 100%,0 100%);font-size:16px;font-weight:600}
.doc a{color:inherit;text-decoration:none}.add{padding-left:7px}
`,`<a class="start" href="#">Start</a><div class="doc"><a href="#">CIVIL 3D WORKFLOW GRADE TRANSITION*</a><button type="button" aria-label="Close drawing">${I('x')}</button></div><button type="button" class="add" aria-label="New drawing">${I('plus')}</button>`);

define('view-cube',`
:host{display:grid;grid-template-columns:56px 52px 56px;grid-template-rows:46px 66px 46px 38px;place-items:center;font-weight:bold;font-size:20px;color:#fff;-webkit-text-stroke:1px #aaa}
.cube{width:52px;height:52px;border:1px solid #777;background:#f4f6f8;display:flex;align-items:center;justify-content:center;color:#7b8288;font-size:14px;-webkit-text-stroke:0}
.cube span{background:#e6eaee;padding:6px 2px}
.n{grid-column:2}.w{grid-column:1}.wcs{grid-column:1/4;width:62px;background:#e9e7ef;color:#a5a5ab;font-weight:normal;font-size:15px;-webkit-text-stroke:0;gap:8px;padding-left:4px;height:22px}
.wcs cad-icon{color:#cfcfd4}
`,`<span class="n">N</span><span class="w">W</span><button type="button" class="cube"><span>TOP</span></button><span>E</span><span class="n">S</span><button type="button" class="wcs">WCS ${I('caret')}</button>`);

define('nav-bar',`
:host{display:flex;flex-direction:column;align-items:center;width:48px;height:290px;border:2px solid #b2b2b2;border-radius:8px;background:#f3f3f3aa;padding:3px 4px;color:#c4c4c4;gap:4px}
hr{width:34px;margin:2px 0;border:0;border-top:1px solid #bbb}
.e{align-self:flex-end}.w{margin-top:10px}.b{margin-top:auto}
.c{transform:scale(.7)}
`,`<cad-icon class="e" name="smallx"></cad-icon><button class="w" aria-label="Steering wheel">${I('wheel')}</button><cad-icon class="c" name="caret"></cad-icon><hr><button aria-label="Pan">${I('pan')}</button><button aria-label="Zoom extents">${I('zoomx')}</button><cad-icon class="c" name="caret"></cad-icon><button aria-label="Orbit">${I('orbit')}</button><cad-icon class="c" name="caret"></cad-icon><hr><button aria-label="Show motion">${I('motion')}</button><cad-icon class="e b" name="smallx"></cad-icon>`);

define('dynamic-prompt',`
:host{display:block;color:#7a7a7a}
.t{display:block;width:75px;background:#969696;border:2px solid #222;color:#1d1d1d;padding-left:5px;height:32px;line-height:22px}
ul{list-style:none;margin:3px 0 0;padding:0;width:95px;border:2px solid #909090;background:#f2f2f2}
li{height:25px;line-height:21px;display:flex}li+li{height:26px;border-top:2px solid #909090;background:#e6e6e6}
li span{width:30px;display:flex;align-items:center;padding-left:6px}
li+li span::before{content:"";width:9px;height:9px;border-radius:50%;background:#111}
`,`<span class="t">Format</span><ul><li><span></span>Grade</li><li><span></span>Slope</li></ul>`);

const BOUNDARY='M591 509.500H1032A54 54 0 0 0 1086 455V256A55 55 0 0 0 1050 205L818 130A55 55 0 0 0 772 134.500L510 286A55 55 0 0 0 487 354L540 477A55 55 0 0 0 591 509.500Z';
define('drawing-area',`
:host{display:block;position:relative;flex:1;min-width:0;overflow:hidden;background:linear-gradient(#fff 0,#fff 42%,#e8e8e8 66%,#cfcfcf 82%,#b3b3b3 100%)}
svg.model{position:absolute;inset:0;width:100%;height:100%}
svg text{font:17px Roboto,sans-serif;fill:#1c1c1c;white-space:pre}
svg text.big{font-size:18px}
svg text.axis{font:300 24px Roboto,sans-serif}
.vp{position:relative;padding:9px 0;color:#333;font-size:16px;display:flex;flex-direction:column;align-items:flex-start}
.vp>div{display:flex}
.win{position:absolute;right:14px;top:12px;display:flex;align-items:center;gap:9px}
view-cube{position:absolute;right:2px;top:36px}
nav-bar{position:absolute;right:4px;top:257px}
dynamic-prompt{position:absolute;left:523px;top:388px}
`,`<svg class="model" role="img" aria-label="Grading boundary">
<defs><marker id="a" viewBox="0 0 10 8" refX="10" refY="4" markerWidth="10" markerHeight="8" markerUnits="userSpaceOnUse" orient="auto"><path d="M0 0 10 4 0 8Z" fill="#111"/></marker></defs>
<g fill="none"><path d="${BOUNDARY}" stroke="#8fb4ff" stroke-opacity=".55" stroke-width="7"/><path d="${BOUNDARY}" stroke="#0f35dc" stroke-width="3"/></g>
<g fill="none" stroke="#333" stroke-width="1.500"><circle cx="1086" cy="258" r="5.500"/><circle cx="1086" cy="455" r="5.500"/><circle cx="829" cy="509" r="5.500"/><circle cx="591" cy="509" r="5.500"/>
<path d="M1165 171 1088 256" marker-end="url(#a)"/><path d="M1152 483 1088 456" marker-end="url(#a)"/><path d="M840 563 829 511" marker-end="url(#a)"/><path d="M83 569H504L589 511" marker-end="url(#a)"/>
<path d="M459 366H546M502 322V409M16 620V700"/></g>
<text x="1170" y="177">GRADE  TO  DISTANCE</text><text x="1170" y="196">30m  3%</text>
<text class="big" x="1156" y="489">DISTANCE  10m  END  SLOPE  2:1</text><text class="big" x="844" y="569">DISTANCE  10m  START  SLOPE  2:1</text><text x="82" y="568">END  CONDITION  GRADE  TO  DISTANCE  30m  &amp;  3%</text>
<text class="axis" x="20" y="614">Y</text><text class="axis" x="91" y="685">X</text></svg>
<div class="vp"><div><button>[−]</button><button>[Top]</button><button>[2D Wireframe]</button></div>${I('corner')}</div>
<div class="win"><button aria-label="Minimize">${I('dmin')}</button><button aria-label="Restore">${I('dmax')}</button><button aria-label="Close">${I('dclose')}</button></div>
<view-cube></view-cube><nav-bar></nav-bar><dynamic-prompt></dynamic-prompt>`);

define('snap-toolbar',`
:host{display:flex;flex-direction:column;align-items:center;width:40px;background:#1f2735;border-left:5px solid #39404f;border-right:2px solid #39404f;overflow:hidden;padding-top:3px}
button{height:30px;justify-content:center;width:28px;flex:none}
.g{display:flex;flex-direction:column}.g:first-of-type{margin-top:5px}
.g+.g{border-top:2px solid #cfd3da;margin-top:3px;padding-top:4px}.g+.g button{height:29px}
`,`${I('grip')}`+[[1,13],[14,14],[15,17],[18,22]].map(([a,b])=>`<div class="g">${Array.from({length:b-a+1},(_,i)=>`<button aria-label="Snap ${a+i}">${I('s'+(a+i))}</button>`).join('')}</div>`).join(''));

define('grading-tools',`
:host{display:flex;flex-direction:column;box-sizing:border-box;background:linear-gradient(#bfcbda,#d5e1ef 40px,#dbe6f1);border:1px solid #4b5360;box-shadow:inset 1px 1px #f3f6fa;padding:0 10px 10px 11px;color:#222}
header{display:flex;height:41px;align-items:flex-start;color:#93a0af;margin-right:-10px}
header span{flex:1;padding-top:15px}
header button{height:23px;width:34px;justify-content:center;border:1px solid #78879a;border-top:0;background:linear-gradient(#c9d6e6,#9fb3ca);margin-top:1px}
header .x{width:51px;background:linear-gradient(#dc8f7c,#c94a2c 50%,#d4613f)}
.bar{display:flex;align-items:center;height:36px;background:#f2f2f2;padding:0 11px 0 7px;gap:11px;border-bottom:1px solid #dcdcdc}
.sep{width:1px;height:100%;background:#b5b5b5;flex:none;margin:0 -1px}
.grp{display:flex;gap:11px}
.combo{display:flex;align-items:center;flex:1;height:29px;border:1px solid #8c8c8c;border-radius:2px;background:#fff;padding:0 5px 0 4px;gap:5px;margin:0 -1px 0 -2px}
.combo select{appearance:none;border:0;background:none;font:inherit;color:#111;flex:1;padding:0}
.split{border:1px solid #d0d0d0;border-radius:4px;background:#fcfcfc;display:flex;height:28px}
.split button{padding:0 3px}.split button+button{border-left:1px solid #d0d0d0;padding:0 2px}
.m{gap:6px}.more{width:20px;justify-content:center}
.st{display:grid;grid-template-columns:437fr 443fr;background:#efefef;height:26px;align-items:center;font-weight:500}
.st span{padding:0 2px 2px}.st span+span{border-left:1px solid #ccc;padding-left:5px}
`,`<header><span>Grading Creation Tools</span><button aria-label="Pin">${I('pin')}</button><button aria-label="Help">${I('help')}</button><button class="x" aria-label="Close">${I('close')}</button></header>
<div class="bar"><div class="grp"><button aria-label="Set group">${I('g1')}</button><button aria-label="Set surface">${I('g2')}</button><button aria-label="Set layer">${I('g3')}</button></div><i class="sep"></i><button aria-label="Criteria set">${I('g4')}</button><label class="combo">${I('g5')}<select aria-label="Criteria"><option>Grade to Distance</option></select>${I('chev')}</label>
<div class="split"><button aria-label="Copy criteria">${I('g6')}</button><button aria-label="Criteria menu">${I('mcaret')}</button></div><i class="sep"></i>
<button class="m" aria-label="Create grading">${I('g7')+I('mcaret')}</button><button class="m" aria-label="Edit grading">${I('g8')+I('mcaret')}</button><button class="m" aria-label="Volume tools">${I('g9')+I('mcaret')}</button><i class="sep"></i>
<button aria-label="Elevation editor">${I('g10')}</button><button aria-label="Outdated">${I('g11')}</button><i class="sep"></i><button aria-label="Group properties">${I('g12')}</button><button aria-label="Grading properties">${I('g13')}</button><i class="sep"></i><button class="more" aria-label="More">${I('g14')}</button></div>
<div class="st"><span>Group: G01.1</span><span>Surface: tn</span></div>`);

define('cad-workspace',`
:host{display:flex;flex-direction:column;height:100vh;position:relative}
main{display:flex;flex:1;min-height:0}
grading-tools{position:absolute;left:507px;top:190px;width:903px}
.pointer{position:absolute;left:311px;top:29px}
`,`<command-line></command-line><ribbon-tabs></ribbon-tabs><ribbon-bar></ribbon-bar><document-tabs></document-tabs><main><drawing-area></drawing-area><snap-toolbar></snap-toolbar></main><grading-tools></grading-tools><cad-icon class="pointer" name="hand"></cad-icon>`);
</script>
</body>
</html>
